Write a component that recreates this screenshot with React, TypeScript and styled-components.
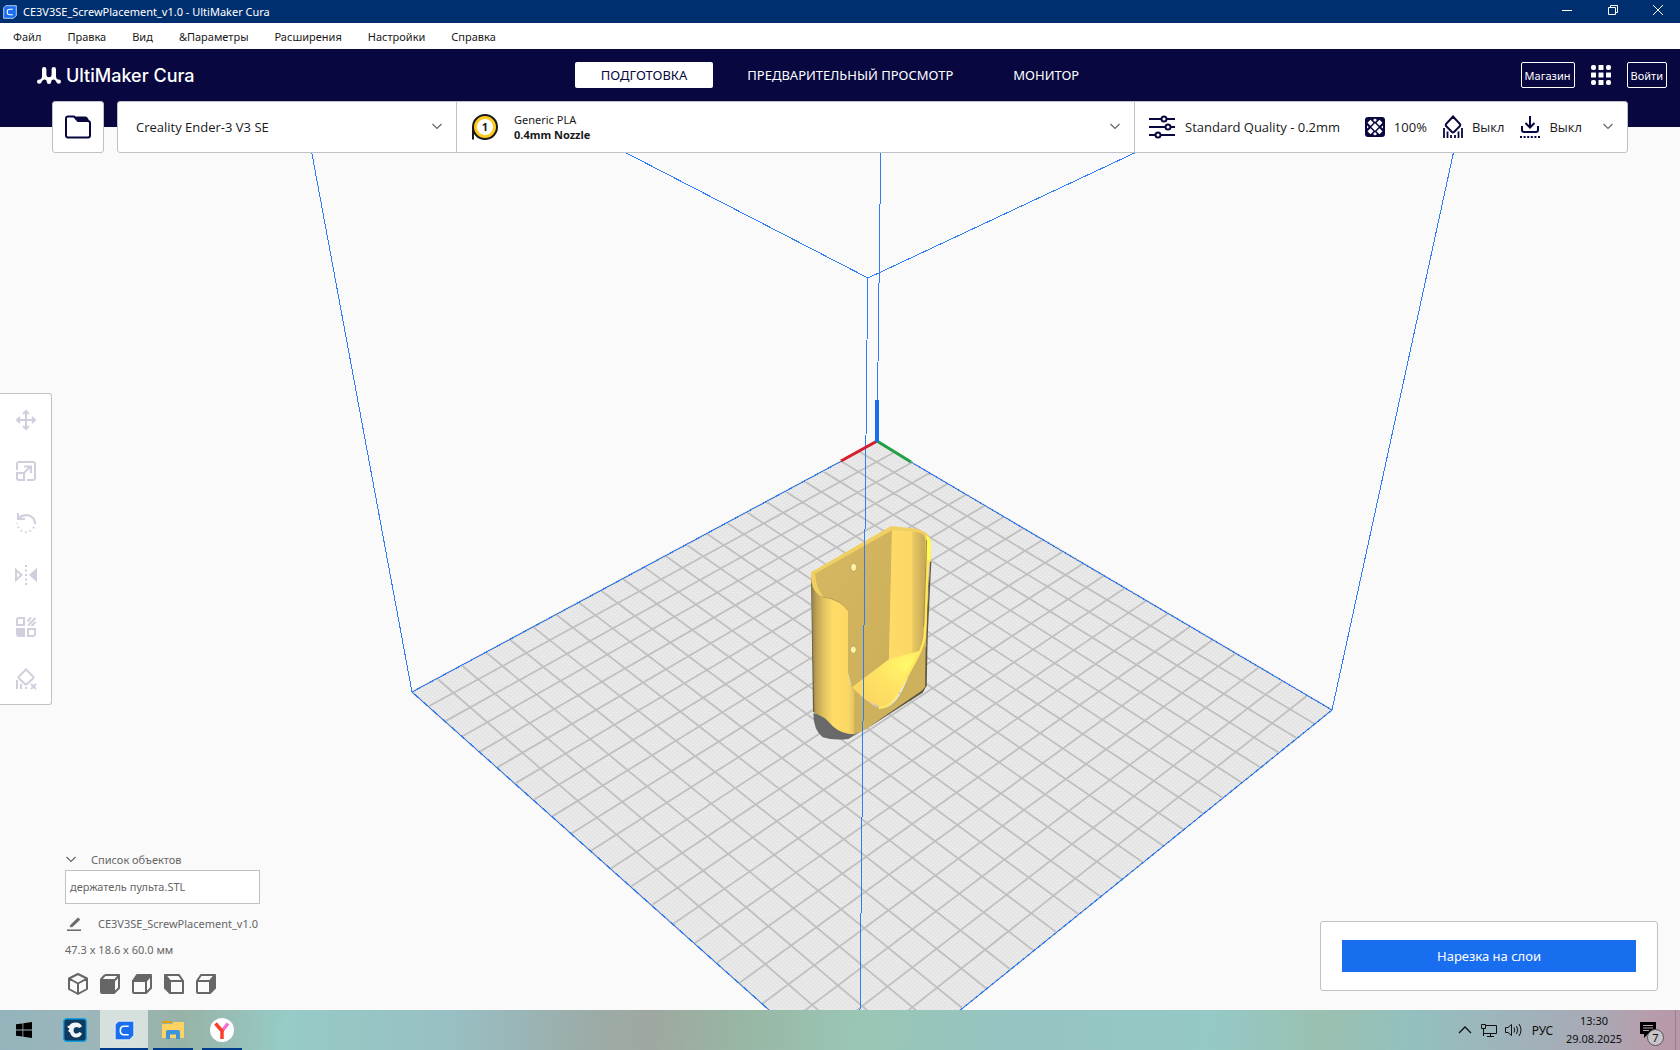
import React from "react";
import styled, { createGlobalStyle } from "styled-components";

const color = {
  navy: "#08073f",
  title: "#002f6f",
  accent: "#196ef0",
  border: "#c0c1c2",
  surface: "#ffffff",
  canvas: "#fafafa",
  text: "#191919",
  muted: "#666666",
  disabled: "#d1cfde",
};

const GlobalStyle = createGlobalStyle`
  * { box-sizing: border-box; }
  html, body, #root { height: 100%; }
  body {
    margin: 0;
    overflow: hidden;
    font-family: "Noto Sans", "Open Sans", sans-serif;
    font-size: 12px;
    color: ${color.text};
  }
  button, select, input { font: inherit; color: inherit; }
  button { border: 0; background: none; padding: 0; }
  svg { display: block; flex: none; }
`;

const Window = styled.div`
  display: flex;
  flex-direction: column;
  height: 100vh;
`;

/* ---------- title bar and menu ---------- */

const TitleBar = styled.div`
  display: flex;
  align-items: center;
  height: 23px;
  padding-left: 3px;
  background: ${color.title};
  color: #fff;
`;

const WindowTitle = styled.h1`
  margin: 0 auto 0 6px;
  font-size: 11px;
  font-weight: 400;
`;

const WindowButton = styled.button`
  display: grid;
  place-items: center;
  width: 46px;
  height: 20px;
  align-self: flex-start;
  &:last-child { width: 44px; }
`;

const MenuBar = styled.nav`
  display: flex;
  height: 26px;
  background: #fff;
`;

const MenuItem = styled.button`
  padding: 0 13px;
  font-size: 11px;
`;

/* ---------- application header ---------- */

const Header = styled.header`
  display: grid;
  grid-template-columns: 1fr auto 1fr;
  align-items: center;
  height: 78px;
  padding: 0 13px 26px;
  background: ${color.navy};
  color: #fff;
`;

const Brand = styled.div`
  display: flex;
  align-items: center;
  gap: 5px;
  padding-left: 24px;
  font-family: Inter, "Liberation Sans", sans-serif;
  font-size: 18px;
  font-weight: 500;
`;

const Stages = styled.nav`
  display: flex;
  gap: 8px;
`;

const StageTab = styled.button<{ $active?: boolean }>`
  height: 26px;
  padding: 0 26px;
  border-radius: 2px;
  font-size: 13px;
  background: ${(p) => (p.$active ? "#fff" : "transparent")};
  color: ${(p) => (p.$active ? color.navy : "#fff")};
`;

const HeaderActions = styled.div`
  display: flex;
  justify-content: flex-end;
  align-items: center;
  gap: 16px;
`;

const OutlineButton = styled.button`
  height: 26px;
  padding: 0 3px;
  border: 1px solid #fff;
  border-radius: 2px;
  font-size: 11px;
`;

/* ---------- workspace ---------- */

const Workspace = styled.main`
  position: relative;
  display: flex;
  flex-direction: column;
  flex: 1;
  min-height: 0;
  background: ${color.canvas};
`;

const SceneLayer = styled.div`
  position: absolute;
  inset: 0;
  overflow: hidden;
  svg { width: 100%; height: 100%; }
`;

const Panel = styled.div`
  background: ${color.surface};
  border: 1px solid ${color.border};
  border-radius: 3px;
`;

const ActionBar = styled.div`
  position: relative;
  display: flex;
  gap: 13px;
  margin: -26px 52px 0;
`;

const OpenButton = styled(Panel).attrs({ as: "button" })`
  display: grid;
  place-items: center;
  width: 52px;
  height: 52px;
`;

const Settings = styled(Panel)`
  display: grid;
  grid-template-columns: 338fr 678fr 493fr;
  flex: 1;
  height: 52px;
`;

const MachineField = styled.label`
  display: flex;
  align-items: center;
  padding: 0 13px 0 18px;
`;

const MachineSelect = styled.select`
  flex: 1;
  height: 50px;
  border: 0;
  padding: 0;
  appearance: none;
  background: transparent;
  font-family: "Open Sans", "Noto Sans", sans-serif;
  font-size: 13px;
`;

const SettingsButton = styled.button`
  display: flex;
  align-items: center;
  padding: 0 13px 0 14px;
  border-left: 1px solid ${color.border};
  text-align: left;
  font-family: "Open Sans", "Noto Sans", sans-serif;
  font-size: 13px;
`;

const Material = styled.span`
  display: flex;
  flex-direction: column;
  flex: 1;
  margin-left: 16px;
  font-family: "Noto Sans", sans-serif;
  font-size: 11px;
  line-height: 15px;
`;

const Profile = styled.span`
  flex: 1;
  margin-left: 10px;
`;

const Metric = styled.span`
  display: flex;
  align-items: center;
  gap: 9px;
  margin-right: 16px;
  &:last-of-type { margin-right: 20px; }
`;

const Body = styled.div`
  position: relative;
  display: flex;
  flex: 1;
  justify-content: space-between;
  align-items: flex-end;
  min-height: 0;
`;

const Sidebar = styled.div`
  display: flex;
  flex-direction: column;
  justify-content: space-between;
  align-self: stretch;
  padding: 240px 0 14px;
`;

const Tools = styled(Panel)`
  display: flex;
  flex-direction: column;
  align-self: flex-start;
  border-left: 0;
  border-radius: 0 3px 3px 0;
`;

const ToolButton = styled.button`
  display: grid;
  place-items: center;
  width: 51px;
  height: 52px;
  color: ${color.disabled};
  &:first-child, &:last-child { height: 51px; }
`;

const Objects = styled.section`
  display: flex;
  flex-direction: column;
  margin-left: 65px;
  width: 195px;
  font-size: 11px;
  color: ${color.muted};
`;

const ObjectsToggle = styled.button`
  display: flex;
  align-items: center;
  gap: 14px;
  height: 21px;
`;

const ObjectList = styled.ul`
  margin: 0;
  padding: 0 4px;
  list-style: none;
  line-height: 32px;
  background: #fff;
  border: 1px solid ${color.border};
`;

const JobName = styled.label`
  display: flex;
  align-items: center;
  gap: 17px;
  height: 39px;
  padding-left: 2px;
`;

const JobInput = styled.input`
  flex: 1;
  min-width: 0;
  padding: 0;
  border: 0;
  background: transparent;
`;

const Dimensions = styled.p`
  margin: 0 0 15px;
  line-height: 14px;
`;

const Views = styled.div`
  display: flex;
  gap: 8px;
  padding-left: 1px;
`;

const ViewButton = styled.button`
  width: 24px;
  height: 24px;
`;

const SlicePanel = styled(Panel)`
  width: 338px;
  margin: 0 22px 19px 0;
  padding: 18px 21px;
`;

const SliceButton = styled.button`
  width: 100%;
  height: 32px;
  background: ${color.accent};
  color: #fff;
  font-size: 13px;
`;

/* ---------- taskbar ---------- */

const Taskbar = styled.footer`
  display: flex;
  justify-content: space-between;
  height: 40px;
  background: linear-gradient(
    92deg,
    #93b4bb 0%, #9cb6bb 5%, #97b3a7 11%, #96cbc6 17%, #98bfc3 27%,
    #9caaa5 36%, #9fa8a0 39%, #98b6a4 44%, #9ac6b4 51%, #95c4c2 60%,
    #95c9c6 72%, #9ac0b0 79%, #93c0bf 84%, #9fb3bb 90%, #a9a9b5 95%,
    #b79dac 98%, #b797a8 100%
  );
  color: #101010;
`;

const Apps = styled.div`
  display: flex;
  gap: 1px;
`;

const AppButton = styled.button<{ $state?: "active" | "open" }>`
  display: grid;
  place-items: center;
  width: 48px;
  background: ${(p) => (p.$state === "active" ? "#d6e0dc" : "transparent")};
  background-image: ${(p) => (p.$state ? "linear-gradient(#003a8a, #003a8a)" : "none")};
  background-repeat: no-repeat;
  background-position: bottom;
  background-size: ${(p) => (p.$state === "active" ? "48px" : "40px")} 2px;
  &:first-child { margin-right: 2px; }
`;

const Tray = styled.div`
  display: flex;
  align-items: center;
  padding-right: 4px;
`;

const TrayButton = styled.button`
  display: grid;
  place-items: center;
  width: 24px;
  height: 40px;
`;

const Language = styled.button`
  width: 35px;
  font-size: 12px;
`;

const Clock = styled.time`
  width: 68px;
  text-align: center;
  font-size: 11px;
  line-height: 18px;
`;

const Notifications = styled.button`
  position: relative;
  width: 48px;
  height: 40px;
  padding-left: 12px;
  border-right: 1px solid #8b8790;
`;

const Badge = styled.span`
  position: absolute;
  left: 19px;
  top: 19px;
  width: 17px;
  height: 17px;
  border: 1px solid #555;
  border-radius: 50%;
  background: #c8c4ca;
  font-size: 11px;
  line-height: 15px;
`;

/* ---------- icons ---------- */

const Chevron = ({ stroke = "#666" }: { stroke?: string }) => (
  <svg width="12" height="12" viewBox="0 0 12 12" fill="none" stroke={stroke} strokeWidth="1.2">
    <path d="M1.500 3L6 7.500 10.500 3" />
  </svg>
);

const AppLogo = ({ size }: { size: number }) => (
  <svg width={size} height={size} viewBox="0 0 20 20">
    <path d="M4 1H19V15L15 19H1V4z" fill={color.accent} stroke="#dbe8f6" strokeWidth="1.2" />
    <path d="M14 6H9.500Q6 6 6 10t3.500 4H14" fill="none" stroke="#fff" strokeWidth="1.500" />
  </svg>
);

const BrandMark = () => (
  <svg width="24" height="17" viewBox="0 0 24 17" fill="#fff">
    <circle cx="2.200" cy="14.600" r="2.200" />
    <circle cx="21.800" cy="14.600" r="2.200" />
    <path d="M5 2.200a2.200 2.200 0 014.400 0V8Q9.500 10.300 12 10.300T14.600 8V2.200a2.200 2.200 0 014.400 0V9.500Q19 12 21 12.400L20 16Q18.500 12.500 16.500 12.500 14.300 12.500 14.200 14.800a2.200 2.200 0 01-4.400 0Q9.700 12.500 7.500 12.500 5.500 12.500 4 16L3 12.400Q5 12 5 9.500z" />
  </svg>
);

const AppGrid = () => (
  <svg width="20" height="20" viewBox="0 0 20 20" fill="#fff">
    {[0, 7.5, 15].map((x) => [0, 7.5, 15].map((y) => (
      <rect key={`${x}-${y}`} x={x} y={y} width="5" height="5" rx={x !== 7.5 && y !== 7.5 ? 2 : 0.5} />
    )))}
  </svg>
);

const FolderIcon = () => (
  <svg width="26" height="24" viewBox="0 0 26 24">
    <path d="M3 1.500H9L13 6H22.500Q25 6 25 8V20.500Q25 22.500 23 22.500H3Q1 22.500 1 20.500V3.500Q1 1.500 3 1.500z" fill="none" stroke={color.navy} strokeWidth="2" />
    <path d="M9 1.500H20Q23 1.500 24 6H13z" fill={color.navy} />
  </svg>
);

const SpoolIcon = () => (
  <svg width="27" height="28" viewBox="0 0 27 28">
    <circle cx="14" cy="14" r="10" fill="#fff" stroke="#ffc924" strokeWidth="4" />
    <circle cx="14" cy="14" r="12" fill="none" stroke="#191919" strokeWidth="2" />
    <path d="M2 14V26.500" stroke="#191919" strokeWidth="2" />
    <text x="14" y="18" textAnchor="middle" fontFamily="Noto Sans, sans-serif" fontSize="11" fontWeight="700" fill="#191919">1</text>
  </svg>
);

const SlidersIcon = () => (
  <svg width="26" height="24" viewBox="0 0 26 24" fill="none" stroke={color.navy} strokeWidth="2">
    <path d="M0 4H12M18 4H26M0 12H16M22 12H26M0 20H6M12 20H26" />
    <circle cx="15" cy="4" r="2.500" /><circle cx="19" cy="12" r="2.500" /><circle cx="9" cy="20" r="2.500" />
  </svg>
);

const InfillIcon = () => (
  <svg width="20" height="20" viewBox="0 0 20 20">
    <rect width="20" height="20" rx="3" fill={color.navy} />
    <path d="M10 6.300L13.700 10 10 13.700 6.300 10zM5.500 2.800L8.500 5.800 5.500 8.800 2.500 5.800zM14.500 2.800L17.500 5.800 14.500 8.800 11.500 5.800zM5.500 11.200L8.500 14.200 5.500 17.200 2.500 14.200zM14.500 11.200L17.500 14.200 14.500 17.200 11.500 14.200zM10 1.500l2 1.500-2 2-2-2zM10 18.500l2-1.500-2-2-2 2zM2 8.500V11.500L3.800 10zM18 8.500V11.500L16.200 10z" fill="#fff" />
  </svg>
);

const SupportIcon = () => (
  <svg width="20" height="24" viewBox="0 0 20 24" fill="none" stroke={color.navy} strokeWidth="2">
    <path d="M10 1.500L17 9Q17.500 10 17 11L11 17Q10 18 9 17L3 11Q2.500 10 3 9z" />
    <path d="M1 13V23M19 13V23M4.500 16.500V23M15.500 16.500V23M8 20V23M12 20V23" strokeWidth="1.800" />
  </svg>
);

const AdhesionIcon = () => (
  <svg width="20" height="24" viewBox="0 0 20 24" fill="none" stroke={color.navy} strokeWidth="2">
    <path d="M10 1V12M5.500 8L10 12.500 14.500 8M2 11V15Q2 17 4 17H16Q18 17 18 15V11" />
    <path d="M0 22H20" strokeDasharray="2 1.600" />
  </svg>
);

const toolIcons: { name: string; art: React.ReactNode }[] = [
  {
    name: "Перемещение",
    art: <path d="M10 1V19M1 10H19M7 4L10 1 13 4M7 16L10 19 13 16M4 7L1 10 4 13M16 7L19 10 16 13" />,
  },
  {
    name: "Масштаб",
    art: <path d="M1 9V3Q1 1 3 1H17Q19 1 19 3V17Q19 19 17 19H11M1 12H8V19H3Q1 19 1 17zM8 12L14.500 5.500M8 5.500H15V12" />,
  },
  {
    name: "Вращение",
    art: (
      <>
        <path d="M2 0V6H9M2.500 5.500Q7 1 13 2.500 19 4.500 19 11" />
        <path d="M18 14Q14 20 8 19 2 17 1 10" strokeDasharray="1.600 3" />
      </>
    ),
  },
  {
    name: "Зеркало",
    art: (
      <>
        <path d="M0 5V15L5.500 10z" />
        <path d="M20 5V15L14.500 10z" fill="currentColor" />
        <path d="M10 0V20" strokeDasharray="2 2.500" />
      </>
    ),
  },
  {
    name: "Параметры модели",
    art: (
      <>
        <path d="M3 1H8V8H1V3Q1 1 3 1zM12 12H19V17Q19 19 17 19H12z" />
        <path d="M1 12H8V19H3Q1 19 1 17z" fill="currentColor" />
        <path d="M11.500 4.500L15 .5M12 8.500L19.500 1M15.500 9L19.500 5" />
      </>
    ),
  },
  {
    name: "Блокировка поддержек",
    art: (
      <>
        <path d="M10 .5L17 7.500Q18 8.500 17 9.500L11 15Q10 16 9 15L3 9.500Q2 8.500 3 7.500zM1 11V20M5 15V20" />
        <path d="M10 18V20M15 15L20 20M20 15L15 20" />
      </>
    ),
  },
];

const cubeViews: { name: string; art: React.ReactNode }[] = [
  { name: "Трёхмерный вид", art: <path d="M12 2L21 6.500V17L12 22 3 17V6.500zM3 6.500L12 11.500 21 6.500M12 11.500V22" /> },
  { name: "Вид спереди", art: <><path d="M7 3H21V16L16 21M2.500 8L7 3M16 9L21 3.500" /><path d="M3 8H16V21H4Q3 21 3 20z" fill="currentColor" /></> },
  { name: "Вид сверху", art: <><path d="M3 9H16V21H4Q3 21 3 20zM21 3.500V16L16 21" /><path d="M7 3H21L16 9H3z" fill="currentColor" /></> },
  { name: "Вид слева", art: <><path d="M8 9H21V21H8zM3 3H17L21 9" /><path d="M3 3L8 9V21L3 16z" fill="currentColor" /></> },
  { name: "Вид справа", art: <><path d="M3 9H16V21H4Q3 21 3 20zM3 9L7 3H21" /><path d="M21 3V16L16 21V9z" fill="currentColor" /></> },
];

/* ---------- 3D scene ---------- */

type Point = [number, number];

/* Bed corners on screen: back, right, front, left. */
const BED: Point[] = [[877, 442], [1332, 710], [860, 1091], [412, 692]];
const CELLS = 22;

/* Perspective map from the unit square onto the bed quadrilateral. */
function bedPoint(u: number, v: number): Point {
  const [[x0, y0], [x1, y1], [x2, y2], [x3, y3]] = BED;
  const dx1 = x1 - x2, dx2 = x3 - x2, sx = x0 - x1 + x2 - x3;
  const dy1 = y1 - y2, dy2 = y3 - y2, sy = y0 - y1 + y2 - y3;
  const det = dx1 * dy2 - dx2 * dy1;
  const g = (sx * dy2 - dx2 * sy) / det;
  const h = (dx1 * sy - sx * dy1) / det;
  const w = g * u + h * v + 1;
  return [
    ((x1 - x0 + g * x1) * u + (x3 - x0 + h * x3) * v + x0) / w,
    ((y1 - y0 + g * y1) * u + (y3 - y0 + h * y3) * v + y0) / w,
  ];
}

const gridPath = Array.from({ length: CELLS + 1 }, (_, i) => i / CELLS)
  .map((t) => `M${bedPoint(t, 0)}L${bedPoint(t, 1)}M${bedPoint(0, t)}L${bedPoint(1, t)}`)
  .join("");

const Model = () => (
  <g transform="translate(780 380) scale(.33333)">
    <path d="M100 1000Q100 1050 128 1072 160 1082 205 1077L250 1050 160 1010z" fill="#696969" />
    <path d="M93 585L99 580 112 1003 99 995z" fill="#655c42" />
    <path d="M436 770L448 545 441 800 438 920 428 938 250 1052 430 920z" fill="#5d553f" />
    <path d="M93 577L333 438 410 446Q452 456 453 490L452 545 445 560 440 800 330 850 110 660Q93 620 93 577z" fill="#f0cf63" />
    <path d="M105 581L336 451 327 840 216 923 204 880 203 692Q190 668 127 650 108 625 105 581z" fill="url(#backWall)" />
    <path d="M336 450L410 456 428 462Q438 470 436 500L432 770 420 815 327 840z" fill="url(#innerWall)" />
    <path d="M216 922L327 838 420 812 400 850 345 950Q325 982 300 980 250 962 216 922z" fill="url(#bowl)" />
    <path d="M437 775L436 920 425 932 250 1052 222 1063 215 922Q265 970 297 984 335 990 365 935z" fill="#ceb15d" />
    <path d="M94 595Q102 638 130 650 190 665 204 692V870Q205 910 223 935L222 1063Q185 1062 160 1040L135 1015 103 998z" fill="url(#shell)" />
    <path d="M93 577L105 581Q107 624 133 652 98 642 94 600z" fill="#f0cf63" />
    <path d="M127 650Q185 660 204 692" fill="none" stroke="#a98f4b" strokeWidth="2" />
    <path d="M440 466Q452 474 453 492L451 545H441z" fill="#ffff52" />
    <path d="M444 540L434 770Q430 800 405 845L348 948Q326 984 297 984" fill="none" stroke="#ffe85c" strokeWidth="7" />
    <path d="M440 480L431 740" stroke="#a48c48" strokeWidth="3" />
    <path d="M452 545L441 770 438 920" fill="none" stroke="#5d553f" strokeWidth="4" />
    <g fill="#fff3a8" stroke="#a98f4b" strokeWidth="2">
      <ellipse cx="221" cy="562" rx="9" ry="12" />
      <ellipse cx="220" cy="809" rx="9" ry="11" />
    </g>
  </g>
);

const Scene = () => (
  <svg viewBox="0 127 1680 883" preserveAspectRatio="xMidYMid slice" role="img" aria-label="Рабочая область печати">
    <defs>
      <pattern id="weave" width="4" height="4" patternUnits="userSpaceOnUse">
        <rect width="4" height="4" fill="#e5e5e5" />
        <path d="M0 .5h2M2 2.500h2" stroke="#ededed" />
      </pattern>
      <linearGradient id="shell">
        <stop offset="0" stopColor="#8f7c47" />
        <stop offset=".12" stopColor="#bfa355" />
        <stop offset=".3" stopColor="#e3c360" />
        <stop offset=".5" stopColor="#ffdc66" />
        <stop offset=".85" stopColor="#fcd965" />
        <stop offset="1" stopColor="#e2c262" />
      </linearGradient>
      <linearGradient id="backWall" x1="0" y1="0" x2="1" y2="1">
        <stop offset="0" stopColor="#d5b860" />
        <stop offset="1" stopColor="#cdaf5b" />
      </linearGradient>
      <linearGradient id="innerWall">
        <stop offset="0" stopColor="#fedb67" />
        <stop offset=".62" stopColor="#fbd865" />
        <stop offset=".66" stopColor="#e8c862" />
        <stop offset="1" stopColor="#c5a757" />
      </linearGradient>
      <radialGradient id="bowl" cx=".8" cy=".25" r=".8">
        <stop offset="0" stopColor="#fff968" />
        <stop offset=".5" stopColor="#ffe464" />
        <stop offset="1" stopColor="#fcd862" />
      </radialGradient>
    </defs>
    <polygon points={BED.join(" ")} fill="url(#weave)" />
    <path d={gridPath} stroke="#c0c0c0" strokeWidth="1.800" fill="none" />
    <Model />
    <g fill="none" stroke="#2f7df4" strokeWidth="1" shapeRendering="crispEdges">
      <polygon points={BED.join(" ")} />
      <path d="M877 442L881 127M412 692L307 127M1332 710L1459 127M576 127L868 278 1190 127M868 278L867 340 860 1010" />
    </g>
    <g fill="none" strokeWidth="3">
      <path d="M877 441L841 461" stroke="#d81e2c" />
      <path d="M877 441L911 462" stroke="#22a043" />
      <path d="M877 442V400" stroke={color.accent} strokeWidth="4" />
    </g>
  </svg>
);

/* ---------- page ---------- */

const menuItems = ["Файл", "Правка", "Вид", "&Параметры", "Расширения", "Настройки", "Справка"];

export default function App() {
  return (
    <Window>
      <GlobalStyle />
      <TitleBar>
        <AppLogo size={14} />
        <WindowTitle>CE3V3SE_ScrewPlacement_v1.0 - UltiMaker Cura</WindowTitle>
        <WindowButton aria-label="Свернуть">
          <svg width="10" height="10" stroke="#fff"><path d="M0 5.500H10" /></svg>
        </WindowButton>
        <WindowButton aria-label="Восстановить">
          <svg width="10" height="10" stroke="#fff" fill="none"><path d="M.5 2.500H7.500V9.500H.5zM2.500 2V.5H9.500V7.500H8" /></svg>
        </WindowButton>
        <WindowButton aria-label="Закрыть">
          <svg width="10" height="10" stroke="#fff"><path d="M0 0L10 10M10 0L0 10" /></svg>
        </WindowButton>
      </TitleBar>
      <MenuBar aria-label="Главное меню">
        {menuItems.map((item) => <MenuItem key={item}>{item}</MenuItem>)}
      </MenuBar>

      <Header>
        <Brand><BrandMark />UltiMaker Cura</Brand>
        <Stages aria-label="Этапы">
          <StageTab $active>ПОДГОТОВКА</StageTab>
          <StageTab>ПРЕДВАРИТЕЛЬНЫЙ ПРОСМОТР</StageTab>
          <StageTab>МОНИТОР</StageTab>
        </Stages>
        <HeaderActions>
          <OutlineButton>Магазин</OutlineButton>
          <button aria-label="Приложения"><AppGrid /></button>
          <OutlineButton>Войти</OutlineButton>
        </HeaderActions>
      </Header>

      <Workspace>
        <SceneLayer><Scene /></SceneLayer>
        <ActionBar>
          <OpenButton aria-label="Открыть файл"><FolderIcon /></OpenButton>
          <Settings>
            <MachineField>
              <MachineSelect aria-label="Принтер">
                <option>Creality Ender-3 V3 SE</option>
              </MachineSelect>
              <Chevron />
            </MachineField>
            <SettingsButton aria-haspopup="true">
              <SpoolIcon />
              <Material>
                <span>Generic PLA</span>
                <b>0.4mm Nozzle</b>
              </Material>
              <Chevron />
            </SettingsButton>
            <SettingsButton aria-haspopup="true">
              <SlidersIcon />
              <Profile>Standard Quality - 0.2mm</Profile>
              <Metric><InfillIcon />100%</Metric>
              <Metric><SupportIcon />Выкл</Metric>
              <Metric><AdhesionIcon />Выкл</Metric>
              <Chevron />
            </SettingsButton>
          </Settings>
        </ActionBar>

        <Body>
          <Sidebar>
            <Tools role="toolbar" aria-label="Инструменты">
              {toolIcons.map(({ name, art }) => (
                <ToolButton key={name} aria-label={name}>
                  <svg width="22" height="22" viewBox="-1 -1 22 22" fill="none" stroke="currentColor" strokeWidth="2">{art}</svg>
                </ToolButton>
              ))}
            </Tools>
            <Objects>
              <ObjectsToggle aria-expanded="true"><Chevron />Список объектов</ObjectsToggle>
              <ObjectList><li>держатель пульта.STL</li></ObjectList>
              <JobName>
                <svg width="14" height="14" viewBox="0 0 14 14" stroke={color.muted} fill={color.muted}>
                  <path d="M0 13.200H14" strokeWidth="1.500" />
                  <path d="M3 10L3.500 8 11 .8 13 2.600 5.500 9.700z" strokeWidth=".5" />
                </svg>
                <JobInput aria-label="Имя задания" defaultValue="CE3V3SE_ScrewPlacement_v1.0" />
              </JobName>
              <Dimensions>47.3 x 18.6 x 60.0 мм</Dimensions>
              <Views>
                {cubeViews.map(({ name, art }) => (
                  <ViewButton key={name} aria-label={name}>
                    <svg width="24" height="24" viewBox="0 0 24 24" fill="none" stroke="currentColor" strokeWidth="2" strokeLinejoin="round">{art}</svg>
                  </ViewButton>
                ))}
              </Views>
            </Objects>
          </Sidebar>
          <SlicePanel><SliceButton>Нарезка на слои</SliceButton></SlicePanel>
        </Body>
      </Workspace>

      <Taskbar>
        <Apps>
          <AppButton aria-label="Пуск">
            <svg width="16" height="16" viewBox="0 0 16 16"><path d="M0 2.300L6.500 1.400V7.600H0zM7.300 1.300L16 0V7.600H7.300zM0 8.400H6.500V14.600L0 13.700zM7.300 8.400H16V16L7.300 14.700z" fill="#000" /></svg>
          </AppButton>
          <AppButton aria-label="Creality Print">
            <svg width="24" height="24" viewBox="0 0 24 24">
              <rect x=".7" y=".7" width="22.600" height="22.600" rx="3" fill="#0d3a60" stroke="#18a0dc" strokeWidth="1.400" />
              <path d="M19 8.500Q17.500 4.500 12.500 4.500 8 4.500 6.500 7.500L4 8.500 6.500 11 5 13 7 14.500Q8.500 19.500 13 19.500 17.500 19.500 19 15.500L16.500 14Q14 16.500 11.500 15 9.500 12.500 11.500 9.800 14 8 16 10z" fill="#f1f5f8" />
            </svg>
          </AppButton>
          <AppButton aria-label="UltiMaker Cura" $state="active"><AppLogo size={21} /></AppButton>
          <AppButton aria-label="Проводник" $state="open">
            <svg width="22" height="20" viewBox="0 0 22 20">
              <path d="M0 1H9L11 3H0z" fill="#e0a100" />
              <path d="M0 4H10L12 2H22V18H0z" fill="#ffd363" />
              <path d="M4 19V11.500Q4 10 6 10H16Q18 10 18 11.500V19H14V14.500H8V19z" fill="#3b94dc" />
            </svg>
          </AppButton>
          <AppButton aria-label="Яндекс Браузер" $state="open">
            <svg width="24" height="24" viewBox="0 0 24 24" fill="none" strokeWidth="3.500">
              <circle cx="12" cy="12" r="12" fill="#fff" />
              <path d="M12 13L18 5.500" stroke="#f46fd0" />
              <path d="M5.500 5.500L12 13V21" stroke="#f8402c" />
            </svg>
          </AppButton>
        </Apps>
        <Tray>
          <TrayButton aria-label="Скрытые значки">
            <svg width="14" height="8" fill="none" stroke="#111" strokeWidth="1.300"><path d="M1 7L7 1 13 7" /></svg>
          </TrayButton>
          <TrayButton aria-label="Сеть">
            <svg width="16" height="14" fill="none" stroke="#111"><path d="M4 2.500H15.500V10.500H3M9.500 10.500V13M6 13.500H13M.5 1.500H4.500V5.500H.5zM2.500 5.500V13" /></svg>
          </TrayButton>
          <TrayButton aria-label="Громкость">
            <svg width="17" height="14" fill="none" stroke="#111"><path d="M.5 4.500H3L6.500 1.500V12.500L3 9.500H.5zM9 4.500Q10.500 7 9 9.500M11.500 3Q14 7 11.500 11M14 1Q18 7 14 13" /></svg>
          </TrayButton>
          <Language>РУС</Language>
          <Clock>13:30<br />29.08.2025</Clock>
          <Notifications aria-label="Уведомления: 7">
            <svg width="16" height="16" viewBox="0 0 16 16"><path d="M0 0H16V12H8L4 16V12H0z" fill="#000" /><path d="M3 3.500H13M3 6H13M3 8.500H9" stroke="#b9a1ae" /></svg>
            <Badge>7</Badge>
          </Notifications>
        </Tray>
      </Taskbar>
    </Window>
  );
}
